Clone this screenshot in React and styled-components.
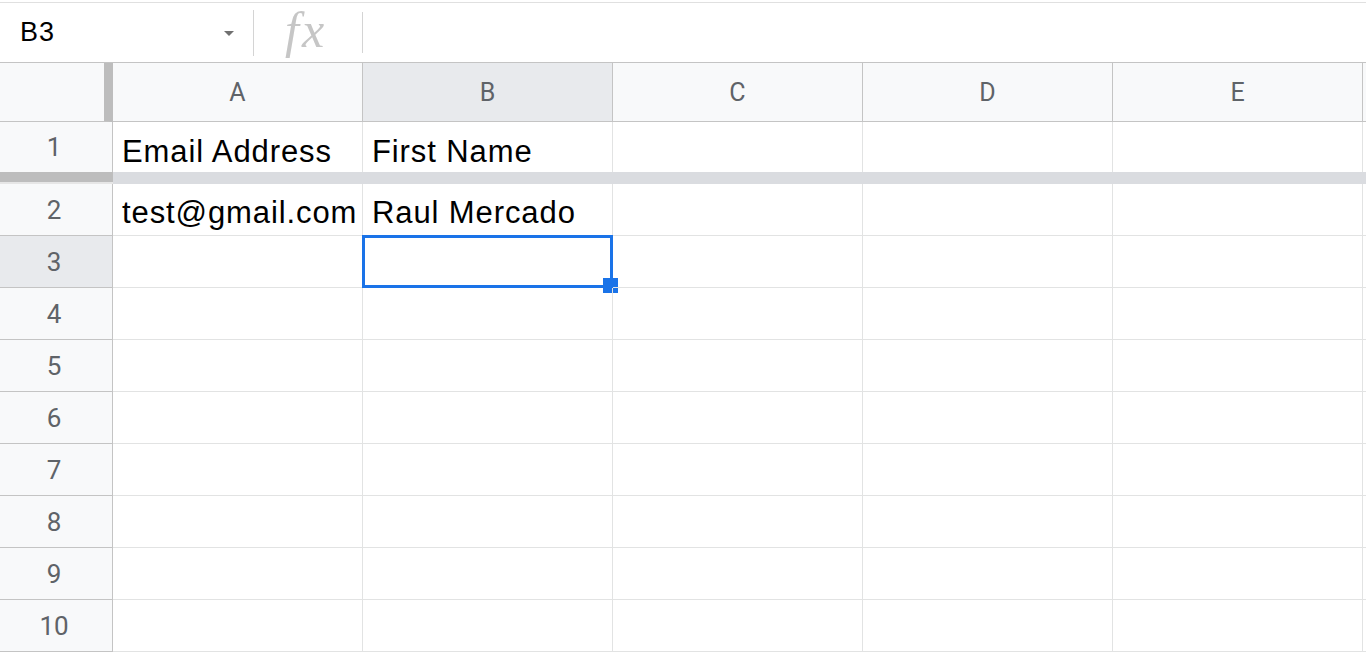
import React from 'react';
import styled, { createGlobalStyle } from 'styled-components'

const GlobalStyle = createGlobalStyle`
  html, body {
    margin: 0;
    background: #fff;
    overflow: hidden;
  }
  * { box-sizing: border-box; }
`

const Page = styled.div`
  width: 1366px;
  height: 653px;
  padding-top: 2px;
  background: #fff;
  overflow: hidden;
`

const FormulaBar = styled.div`
  display: flex;
  align-items: center;
  height: 61px;
  border-top: 1px solid #e0e0e0;
  border-bottom: 1px solid #c4c4c4;
`

const NameBox = styled.div`
  display: flex;
  align-items: center;
  justify-content: space-between;
  width: 253px;
  height: 100%;
  padding: 0 19px 0 20px;
  font-family: "Liberation Sans", Arial, sans-serif;
  font-size: 27px;
  letter-spacing: 1px;
  color: #000;
`

const Caret = styled.span`
  width: 0;
  height: 0;
  border-left: 5px solid transparent;
  border-right: 5px solid transparent;
  border-top: 5px solid #707070;
  margin-top: 2px;
`

const Divider = styled.div`
  width: 1px;
  height: ${p => p.$h}px;
  background: #d4d4d4;
`

const FxBox = styled.div`
  width: 108px;
  padding-left: 31px;
  font-family: "Liberation Serif", "Times New Roman", serif;
  font-style: italic;
  font-size: 50px;
  letter-spacing: 3px;
  color: #c6c6c6;
  line-height: 1;
  margin-top: -5px;
`

const Sheet = styled.div`
  display: grid;
  grid-template-columns: 113px repeat(5, 250px) 1fr;
  grid-template-rows: 59px 50px 12px repeat(9, 52px);
`

const Corner = styled.div`
  background: #f8f9fa;
  border-right: 9px solid #bdbdbd;
  border-bottom: 1px solid #c4c4c4;
`

const ColHead = styled.div`
  display: flex;
  align-items: center;
  justify-content: center;
  background: ${p => (p.$active ? '#e8eaed' : '#f8f9fa')};
  border-right: 1px solid #c4c4c4;
  border-bottom: 1px solid #c4c4c4;
  font-family: Roboto, "Liberation Sans", sans-serif;
  font-size: 25px;
  color: #5f6368;
`

const RowHead = styled.div`
  display: flex;
  align-items: center;
  justify-content: center;
  padding-right: 4px;
  background: ${p => (p.$active ? '#e8eaed' : '#f8f9fa')};
  border-right: 1px solid #c4c4c4;
  border-bottom: ${p => (p.$frozen ? 'none' : '1px solid #c4c4c4')};
  font-family: Roboto, "Liberation Sans", sans-serif;
  font-size: 26px;
  color: #5f6368;
`

const Cell = styled.div`
  position: relative;
  display: flex;
  align-items: flex-end;
  padding: 0 0 ${p => (p.$frozen ? 3 : 5)}px 9px;
  border-right: 1px solid #e2e3e3;
  border-bottom: ${p => (p.$frozen ? 'none' : '1px solid #e2e3e3')};
  font-family: "Liberation Sans", Arial, sans-serif;
  font-size: 31px;
  line-height: 34px;
  letter-spacing: 0.9px;
  color: #000;
  white-space: nowrap;
`

const FreezeHead = styled.div`
  background: #bdbdbd;
  border-bottom: 2px solid #e6e6e6;
`

const FreezeBand = styled.div`
  grid-column: 2 / -1;
  background: #dadce0;
`

const Selection = styled.div`
  position: absolute;
  top: -1px;
  left: -1px;
  right: -1px;
  bottom: -1px;
  border: 3px solid #1a73e8;
  pointer-events: none;
`

const Handle = styled.div`
  position: absolute;
  right: -8px;
  bottom: -8px;
  width: 15px;
  height: 15px;
  background: #1a73e8;
`

const cols = ['A', 'B', 'C', 'D', 'E']
const data = {
  1: ['Email Address', 'First Name'],
  2: ['test@gmail.com', 'Raul Mercado'],
}
const active = { row: 3, col: 1 }

const renderRow = (r) => {
  const frozen = r === 1
  const values = data[r] || []
  return (
    <React.Fragment key={r}>
      <RowHead $active={r === active.row} $frozen={frozen}>{r}</RowHead>
      {cols.map((c, i) => (
        <Cell key={c} $frozen={frozen}>
          {values[i]}
          {r === active.row && i === active.col && (
            <Selection><Handle /></Selection>
          )}
        </Cell>
      ))}
      <Cell $frozen={frozen} />
    </React.Fragment>
  )
}

export default () =>
  <Page>
    <GlobalStyle />
    <FormulaBar>
      <NameBox>
        B3
        <Caret />
      </NameBox>
      <Divider $h={46} />
      <FxBox>fx</FxBox>
      <Divider $h={41} />
    </FormulaBar>

    <Sheet>
      <Corner />
      {cols.map((c, i) => (
        <ColHead key={c} $active={i === active.col}>{c}</ColHead>
      ))}
      <ColHead />

      {renderRow(1)}
      <FreezeHead />
      <FreezeBand />
      {[2, 3, 4, 5, 6, 7, 8, 9, 10].map(renderRow)}
    </Sheet>
  </Page>
